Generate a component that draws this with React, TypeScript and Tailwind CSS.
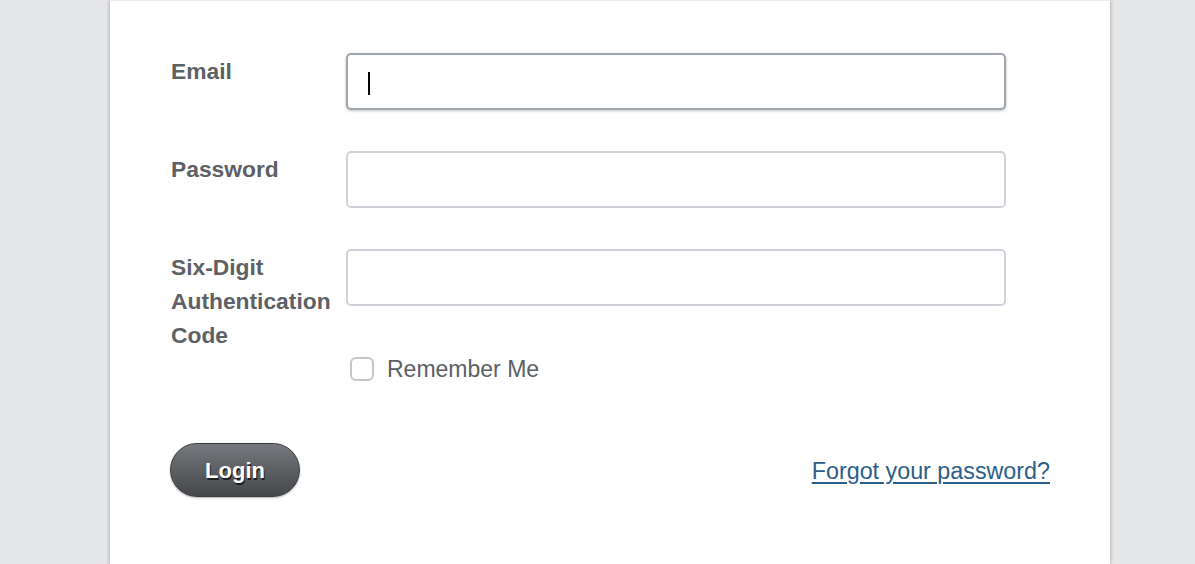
import React from "react";

export default function App() {
  const font = { fontFamily: '"Liberation Sans", Arial, Helvetica, sans-serif' };
  return (
    <div className="w-[1195px] h-[564px] bg-[#e6e7e9] overflow-hidden" style={font}>
      <div className="ml-[110px] w-[1000px] h-[564px] bg-white border-t border-[#ececec] shadow-[0_0_4px_rgba(0,0,0,0.35)] pl-[61px] pr-[60px] pt-[52px]">
        <div className="flex">
          <label className="w-[175px] pt-[1px] text-[22.8px] leading-[34px] font-bold text-[#5d6064]">Email</label>
          <div className="relative w-[660px] h-[57px] rounded-[5px] border-2 border-[#a1a7ae] shadow-[0_1px_3px_rgba(0,0,0,0.25)] bg-white">
            <span className="absolute left-[20px] top-[17px] w-[2px] h-[23px] bg-black" />
          </div>
        </div>
        <div className="flex mt-[41px]">
          <label className="w-[175px] pt-[1px] text-[22.8px] leading-[34px] font-bold text-[#5d6064]">Password</label>
          <div className="w-[660px] h-[57px] rounded-[5px] border-2 border-[#cfd3d9] bg-white" />
        </div>
        <div className="flex mt-[41px]">
          <label className="w-[175px] pt-[1px] text-[22.8px] leading-[34px] font-bold text-[#5d6064]">
            Six-Digit<br />Authentication<br />Code
          </label>
          <div className="w-[660px] h-[57px] rounded-[5px] border-2 border-[#cfd3d9] bg-white" />
        </div>
        <div className="flex items-center pl-[179px] h-[34px]">
          <span className="w-[24px] h-[24px] rounded-[6px] border-2 border-[#c3c6ca] bg-white" />
          <span className="ml-[13px] pt-[1px] text-[23px] text-[#5d6064]">Remember Me</span>
        </div>
        <div className="flex items-center justify-between mt-[57px]">
          <button className="-ml-[1px] w-[130px] h-[54px] rounded-full border border-[#3b3d40] bg-gradient-to-b from-[#76797d] to-[#45474a] text-white text-[22px] font-bold [text-shadow:1px_2px_0_#1e1f21] shadow-[0_1px_2px_rgba(0,0,0,0.3)]">
            Login
          </button>
          <a href="#" className="pt-[3px] text-[23.3px] text-[#2d5e8a] underline underline-offset-[3px]">Forgot your password?</a>
        </div>
      </div>
    </div>
  );
}
